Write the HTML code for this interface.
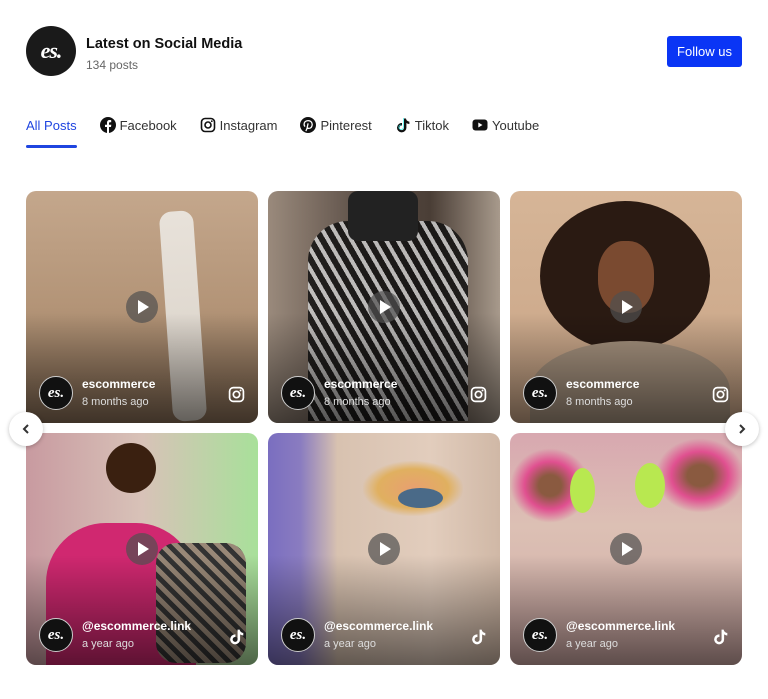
<!DOCTYPE html>
<html><head><meta charset="utf-8"><style>
*{margin:0;padding:0;box-sizing:border-box}
body{width:768px;height:699px;background:#fff;font-family:"Liberation Sans",sans-serif;position:relative;overflow:hidden}
.logo{position:absolute;left:26px;top:26px;width:50px;height:50px;border-radius:50%;background:#1a1a1a;color:#fff;font:italic bold 22px "Liberation Serif",serif;display:flex;align-items:center;justify-content:center;letter-spacing:-1px}
.title{position:absolute;left:86px;top:36px;font-size:14.5px;font-weight:bold;color:#111}
.sub{position:absolute;left:86px;top:58px;font-size:12px;color:#666}
.btn{position:absolute;left:667px;top:36px;width:75px;height:31px;background:#0a35f5;border-radius:3px;color:#fff;font-size:13px;display:flex;align-items:center;justify-content:center}
.tabs{position:absolute;top:116px;left:26px;display:flex;font-size:13px;color:#333}
.tab{display:flex;align-items:center;gap:4px;margin-right:23px;height:18px}
.tab svg{width:16px;height:16px}
.ul{position:absolute;left:26px;top:145px;width:51px;height:3px;background:#1f45e0;border-radius:2px}
.card{position:absolute;width:232px;height:232px;border-radius:10px;overflow:hidden}
.shade{position:absolute;left:0;right:0;bottom:0;height:110px;background:linear-gradient(transparent,rgba(0,0,0,.55))}
.play{position:absolute;left:100px;top:100px;width:32px;height:32px;border-radius:50%;background:rgba(80,80,80,.7)}
.play:after{content:"";position:absolute;left:12px;top:9px;border-left:11px solid #fff;border-top:7px solid transparent;border-bottom:7px solid transparent}
.av{position:absolute;left:13px;bottom:13px;width:34px;height:34px;border-radius:50%;background:#111;border:1.5px solid #ccc;color:#fff;font:italic bold 15px "Liberation Serif",serif;display:flex;align-items:center;justify-content:center}
.nm{position:absolute;left:56px;bottom:32px;color:#fff;font-size:12px;font-weight:bold}
.tm{position:absolute;left:56px;bottom:15px;color:#ddd;font-size:11px}
.ic{position:absolute;right:13px;bottom:20px;width:17px;height:17px}
.arr{position:absolute;top:412px;width:34px;height:34px;border-radius:50%;background:#fff;box-shadow:0 1px 4px rgba(0,0,0,.25);display:flex;align-items:center;justify-content:center}
</style></head><body>
<div class="logo">es.</div>
<div class="title">Latest on Social Media</div>
<div class="sub">134 posts</div>
<div class="btn">Follow us</div>
<div class="tabs">
<div class="tab" style="color:#1f45e0">All Posts</div>
<div class="tab"><svg viewBox="0 0 16 16"><circle cx="8" cy="8" r="8" fill="#111"/><path d="M9 16V10h2l.3-2.3H9V6.3c0-.6.2-1 1-1h1.2V3.2C10.9 3.1 10.3 3 9.6 3 8 3 7 4 7 5.8v1.9H5V10h2v6z" fill="#fff"/></svg>Facebook</div>
<div class="tab"><svg viewBox="0 0 16 16"><rect x="1.5" y="1.5" width="13" height="13" rx="3.5" fill="none" stroke="#111" stroke-width="1.6"/><circle cx="8" cy="8" r="3" fill="none" stroke="#111" stroke-width="1.6"/><circle cx="11.8" cy="4.2" r=".9" fill="#111"/></svg>Instagram</div>
<div class="tab"><svg viewBox="0 0 16 16"><circle cx="8" cy="8" r="8" fill="#111"/><path d="M7.3 10.2C7 11.6 6.6 12.9 5.8 14M7.2 10.4c.3.6 1 1 1.8 1 2 0 3.2-1.9 3.2-4 0-2.2-1.8-3.8-4.1-3.8-2.6 0-4 1.8-4 3.6 0 1 .4 1.9 1.1 2.2M8.1 6.4 7.2 10.4" fill="none" stroke="#fff" stroke-width="1.3"/></svg>Pinterest</div>
<div class="tab"><svg viewBox="0 0 16 16"><path d="M9 1.5v9.3a2.3 2.3 0 1 1-2-2.3V6a4.7 4.7 0 1 0 4.4 4.7V6c.9.6 1.9 1 3 1V4.6C12.6 4.5 11.2 3.2 11 1.5z" fill="#111"/><path d="M8.4 1v9.3a2.3 2.3 0 1 1-2-2.3" fill="none" stroke="#25f4ee" stroke-width=".8" opacity=".8"/></svg>Tiktok</div>
<div class="tab"><svg viewBox="0 0 16 16"><rect x="0.5" y="2.5" width="15" height="11" rx="3" fill="#111"/><path d="M6.3 5.5v5l4.2-2.5z" fill="#fff"/></svg>Youtube</div>
</div>
<div class="ul"></div>

<div class="card" style="left:26px;top:191px;background:linear-gradient(180deg,#c4a78c,#b39477 50%,#8a7058)">
 <div style="position:absolute;left:140px;top:20px;width:34px;height:210px;background:linear-gradient(#e8e2da,#d8d0c6);transform:rotate(-4deg);border-radius:12px"></div>
 <div class="shade"></div><div class="play"></div><div class="av">es.</div><div class="nm">escommerce</div><div class="tm">8 months ago</div>
 <svg class="ic" viewBox="0 0 16 16"><rect x="1.5" y="1.5" width="13" height="13" rx="3.5" fill="none" stroke="#fff" stroke-width="1.6"/><circle cx="8" cy="8" r="3" fill="none" stroke="#fff" stroke-width="1.6"/><circle cx="11.8" cy="4.2" r=".9" fill="#fff"/></svg>
</div>
<div class="card" style="left:268px;top:191px;background:linear-gradient(90deg,#9a8a7c,#5d5048 40%,#4a3e36 70%,#a89a8c)">
 <div style="position:absolute;left:40px;top:30px;width:160px;height:200px;background:repeating-linear-gradient(60deg,#111 0 6px,#ccc 6px 10px);border-radius:40px 40px 0 0;opacity:.85"></div>
 <div style="position:absolute;left:80px;top:0;width:70px;height:50px;background:#222;border-radius:10px"></div>
 <div class="shade"></div><div class="play"></div><div class="av">es.</div><div class="nm">escommerce</div><div class="tm">8 months ago</div>
 <svg class="ic" viewBox="0 0 16 16"><rect x="1.5" y="1.5" width="13" height="13" rx="3.5" fill="none" stroke="#fff" stroke-width="1.6"/><circle cx="8" cy="8" r="3" fill="none" stroke="#fff" stroke-width="1.6"/><circle cx="11.8" cy="4.2" r=".9" fill="#fff"/></svg>
</div>
<div class="card" style="left:510px;top:191px;background:linear-gradient(180deg,#d6b597,#c8a486)">
 <div style="position:absolute;left:30px;top:10px;width:170px;height:150px;background:#2a1a12;border-radius:50%"></div>
 <div style="position:absolute;left:88px;top:50px;width:56px;height:72px;background:#7a4a30;border-radius:45%"></div>
 <div style="position:absolute;left:20px;top:150px;width:200px;height:100px;background:#a89480;border-radius:50% 50% 0 0"></div>
 <div class="shade"></div><div class="play"></div><div class="av">es.</div><div class="nm">escommerce</div><div class="tm">8 months ago</div>
 <svg class="ic" viewBox="0 0 16 16"><rect x="1.5" y="1.5" width="13" height="13" rx="3.5" fill="none" stroke="#fff" stroke-width="1.6"/><circle cx="8" cy="8" r="3" fill="none" stroke="#fff" stroke-width="1.6"/><circle cx="11.8" cy="4.2" r=".9" fill="#fff"/></svg>
</div>

<div class="card" style="left:26px;top:433px;background:linear-gradient(90deg,#c89aa0,#d8c2b8 50%,#a8e09a)">
 <div style="position:absolute;left:80px;top:10px;width:50px;height:50px;background:#3a2010;border-radius:50%"></div>
 <div style="position:absolute;left:20px;top:90px;width:150px;height:150px;background:#d02870;border-radius:40% 40% 0 0"></div>
 <div style="position:absolute;left:130px;top:110px;width:90px;height:120px;background:repeating-linear-gradient(45deg,#333 0 5px,#998877 5px 10px);border-radius:20px"></div>
 <div class="shade"></div><div class="play"></div><div class="av">es.</div><div class="nm">@escommerce.link</div><div class="tm">a year ago</div>
 <svg class="ic" viewBox="0 0 16 16"><path d="M9 1.5v9.3a2.3 2.3 0 1 1-2-2.3V6a4.7 4.7 0 1 0 4.4 4.7V6c.9.6 1.9 1 3 1V4.6C12.6 4.5 11.2 3.2 11 1.5z" fill="#fff"/></svg>
</div>
<div class="card" style="left:268px;top:433px;background:linear-gradient(90deg,#7a6ec0 0,#8a7cc0 14%,#d8c2b0 30%,#e2cdbd 70%,#d0b8a6)">
 <div style="position:absolute;left:95px;top:28px;width:100px;height:55px;background:radial-gradient(ellipse,#e8a070,#e0b060 50%,transparent 72%)"></div>
 <div style="position:absolute;left:130px;top:55px;width:45px;height:20px;background:#4a6a88;border-radius:50%"></div>
 <div class="shade"></div><div class="play"></div><div class="av">es.</div><div class="nm">@escommerce.link</div><div class="tm">a year ago</div>
 <svg class="ic" viewBox="0 0 16 16"><path d="M9 1.5v9.3a2.3 2.3 0 1 1-2-2.3V6a4.7 4.7 0 1 0 4.4 4.7V6c.9.6 1.9 1 3 1V4.6C12.6 4.5 11.2 3.2 11 1.5z" fill="#fff"/></svg>
</div>
<div class="card" style="left:510px;top:433px;background:linear-gradient(180deg,#d8a8b0,#dcc0b4 40%,#d0aaa6)">
 <div style="position:absolute;left:0;top:15px;width:80px;height:75px;background:radial-gradient(ellipse,#8a5a40 20%,#e05090 45%,transparent 70%)"></div>
 <div style="position:absolute;left:60px;top:35px;width:25px;height:45px;background:#b8e850;border-radius:50%"></div>
 <div style="position:absolute;left:145px;top:5px;width:90px;height:75px;background:radial-gradient(ellipse,#8a5a40 20%,#e05090 45%,transparent 70%)"></div>
 <div style="position:absolute;left:125px;top:30px;width:30px;height:45px;background:#b8e850;border-radius:50%"></div>
 <div class="shade"></div><div class="play"></div><div class="av">es.</div><div class="nm">@escommerce.link</div><div class="tm">a year ago</div>
 <svg class="ic" viewBox="0 0 16 16"><path d="M9 1.5v9.3a2.3 2.3 0 1 1-2-2.3V6a4.7 4.7 0 1 0 4.4 4.7V6c.9.6 1.9 1 3 1V4.6C12.6 4.5 11.2 3.2 11 1.5z" fill="#fff"/></svg>
</div>

<div class="arr" style="left:9px"><svg width="12" height="12" viewBox="0 0 12 12"><path d="M8 2 4 6l4 4" fill="none" stroke="#333" stroke-width="2"/></svg></div>
<div class="arr" style="left:725px"><svg width="12" height="12" viewBox="0 0 12 12"><path d="M4 2l4 4-4 4" fill="none" stroke="#333" stroke-width="2"/></svg></div>
</body></html>
